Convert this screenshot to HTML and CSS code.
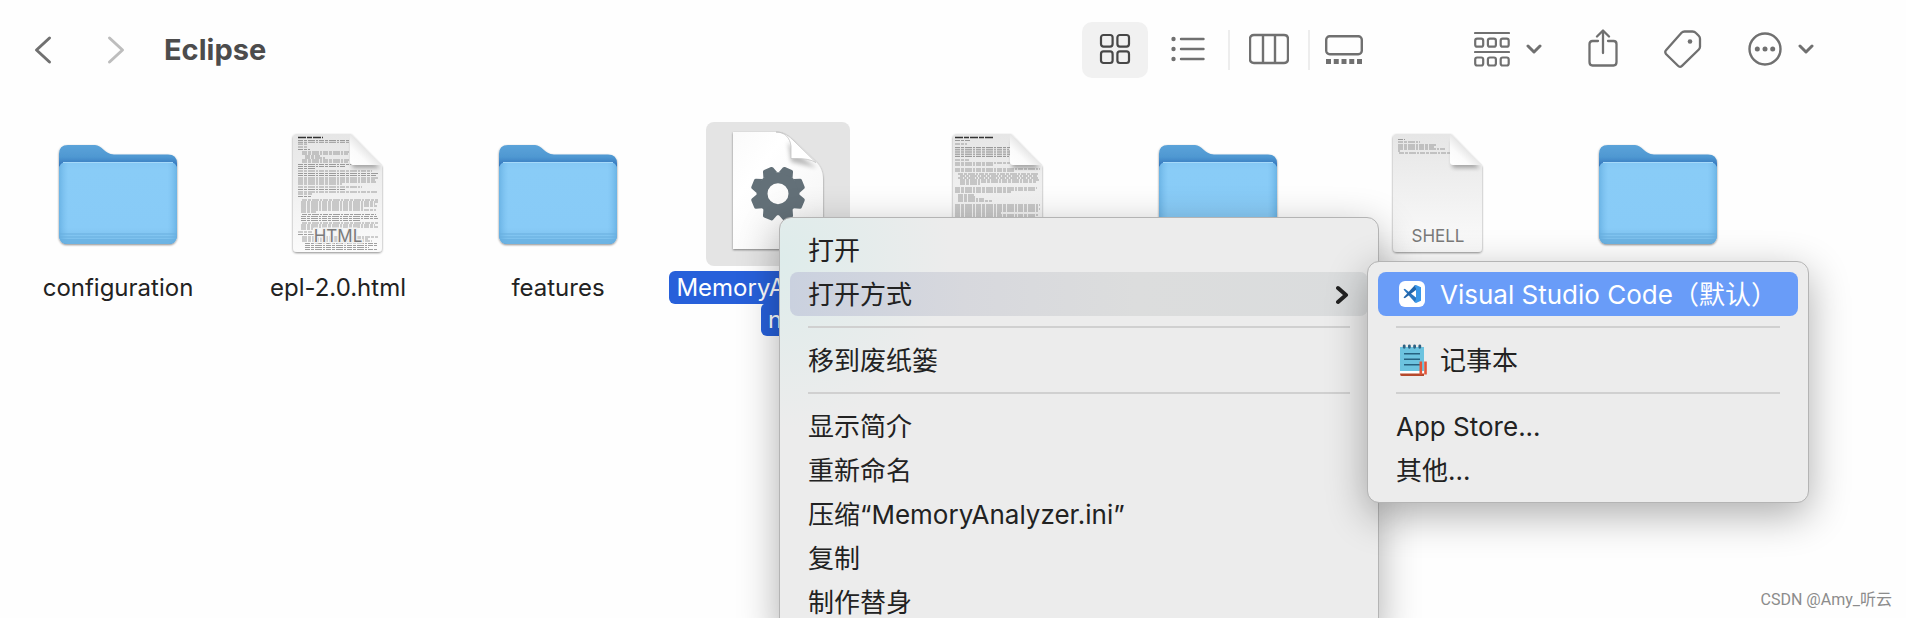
FILE: index.html
```
<!DOCTYPE html>
<html lang="zh-CN">
<head>
<meta charset="utf-8">
<title>Eclipse</title>
<link rel="stylesheet" href="styles.css">
</head>
<body>
<svg class="defs" width="0" height="0" aria-hidden="true">
  <defs>
    <linearGradient id="folder-back" x1="0" y1="0" x2="0" y2="1">
      <stop offset="0" stop-color="#5ba3d9"/><stop offset=".12" stop-color="#4f98d2"/><stop offset=".2" stop-color="#3579bf"/><stop offset="1" stop-color="#3579bf"/>
    </linearGradient>
    <linearGradient id="folder-front" x1="0" y1="0" x2="0" y2="1">
      <stop offset="0" stop-color="#84c8f4"/><stop offset=".1" stop-color="#89ccf7"/><stop offset=".8" stop-color="#88cbf7"/><stop offset="1" stop-color="#79bdea"/>
    </linearGradient>
    <linearGradient id="folder-side" x1="0" y1="0" x2="1" y2="0">
      <stop offset="0" stop-color="#4c9bd3" stop-opacity=".5"/><stop offset=".08" stop-color="#6cb4e6" stop-opacity="0"/><stop offset=".92" stop-color="#6cb4e6" stop-opacity="0"/><stop offset="1" stop-color="#4c9bd3" stop-opacity=".5"/>
    </linearGradient>
    <linearGradient id="page" x1="0" y1="0" x2="0" y2="1">
      <stop offset="0" stop-color="#e6e6e6"/><stop offset="1" stop-color="#fbfbfb"/>
    </linearGradient>
    <linearGradient id="fold" x1="0" y1="1" x2=".6" y2=".4">
      <stop offset="0" stop-color="#fff"/><stop offset=".5" stop-color="#fbfbfb"/><stop offset="1" stop-color="#dedede"/>
    </linearGradient>
    <linearGradient id="ini-page" x1="0" y1="0" x2="1" y2="1">
      <stop offset="0" stop-color="#fafafa"/><stop offset=".3" stop-color="#fff"/><stop offset="1" stop-color="#f4f4f4"/>
    </linearGradient>
    <filter id="drop" x="-10%" y="-10%" width="120%" height="125%">
      <feDropShadow dx="0" dy="1" stdDeviation="1.2" flood-color="#000" flood-opacity=".45"/>
    </filter>
    <filter id="soft" x="-30%" y="-30%" width="160%" height="160%">
      <feGaussianBlur stdDeviation="2"/>
    </filter>
    <symbol id="folder" viewBox="0 0 144 144">
      <g filter="url(#drop)">
        <path fill="url(#folder-back)" d="M13 112V32q0-9 9-9h27c7 0 9 9 19 9.500h54q9 0 9 9V112q0 10-9 10H22q-9 0-9-10z"/>
        <path fill="url(#folder-front)" d="M13 48q0-8 8-8h102q8 0 8 8v65q0 9-9 9H22q-9 0-9-9z"/>
      </g>
      <path fill="url(#folder-side)" d="M13 48q0-8 8-8h102q8 0 8 8v65q0 9-9 9H22q-9 0-9-9z"/>
      <path stroke="#a5d9fa" d="M17 40.500h110" fill="none"/>
      <path stroke="#69afdf" d="M13.500 112h117M14 115h116" fill="none"/>
      <path fill="#65aedf" opacity=".65" d="M14 117h116q-2 5-8 5H22q-6 0-8-5z"/>
    </symbol>
    <symbol id="sheet" viewBox="0 0 144 144">
      <path filter="url(#drop)" fill="url(#page)" d="M31 12h54l31 32v82q0 4-4 4H31q-4 0-4-4V16q0-4 4-4z"/>
    </symbol>
    <symbol id="corner" viewBox="0 0 144 144">
      <path filter="url(#soft)" fill="#000" opacity=".3" d="M86 18v25q0 3 3 3h25z"/>
      <path fill="url(#fold)" d="M84 12v28q0 3 3 3h29z"/>
    </symbol>
    <symbol id="chevron" viewBox="0 0 16 10">
      <path d="M2 2l6 6 6-6" fill="none" stroke="currentColor" stroke-width="3" stroke-linecap="round" stroke-linejoin="round"/>
    </symbol>
  </defs>
</svg>

<header class="toolbar">
  <nav class="history">
    <button class="nav" type="button" aria-label="返回"><svg width="20" height="30" viewBox="0 0 20 30"><path d="M16.500 3L3.500 15l13 12"/></svg></button>
    <button class="nav nav-off" type="button" aria-label="前进"><svg width="20" height="30" viewBox="0 0 20 30"><path d="M3.500 3l13 12-13 12"/></svg></button>
  </nav>
  <h1 class="title">Eclipse</h1>
  <div class="views">
    <button class="view view-on" type="button" aria-label="图标">
      <svg width="32" height="32" viewBox="0 0 32 32"><g fill="none" stroke="currentColor" stroke-width="2.200"><rect x="2" y="2" width="11.600" height="11.600" rx="2.500"/><rect x="18.400" y="2" width="11.600" height="11.600" rx="2.500"/><rect x="2" y="18.400" width="11.600" height="11.600" rx="2.500"/><rect x="18.400" y="18.400" width="11.600" height="11.600" rx="2.500"/></g></svg>
    </button>
    <button class="view view-list" type="button" aria-label="列表">
      <svg width="34" height="28" viewBox="0 0 34 28"><g fill="currentColor"><circle cx="2.500" cy="4" r="2.200"/><circle cx="2.500" cy="14" r="2.200"/><circle cx="2.500" cy="24" r="2.200"/></g><path d="M10 4h22.500M10 14h22.500M10 24h22.500" stroke="currentColor" stroke-width="2.400" stroke-linecap="round"/></svg>
    </button>
    <span class="rule"></span>
    <button class="view view-columns" type="button" aria-label="分栏">
      <svg width="40" height="32" viewBox="0 0 40 32"><path d="M5 2h30q4 0 4 4v20q0 4-4 4H5q-4 0-4-4V6q0-4 4-4zM14 2v28M26 2v28" fill="none" stroke="currentColor" stroke-width="2.400"/></svg>
    </button>
    <span class="rule"></span>
    <button class="view view-gallery" type="button" aria-label="画廊">
      <svg width="38" height="32" viewBox="0 0 38 32"><rect x="1.200" y="3.200" width="35.600" height="18" rx="3.500" fill="none" stroke="currentColor" stroke-width="2.400"/><path d="M1 26h5v5H1zM8.750 26h5v5h-5zM16.500 26h5v5h-5zM24.250 26h5v5h-5zM32 26h5v5h-5z" fill="currentColor"/></svg>
    </button>
  </div>
  <div class="tools">
    <button class="tool" type="button" aria-label="分组">
      <svg width="36" height="36" viewBox="0 0 36 36"><g fill="none" stroke="currentColor" stroke-width="2.200"><path d="M1 2h34M1 21h34" stroke-linecap="round"/><rect x="1.200" y="7.700" width="8" height="8" rx="2"/><rect x="13.900" y="7.700" width="8" height="8" rx="2"/><rect x="26.700" y="7.700" width="8" height="8" rx="2"/><rect x="1.200" y="26.500" width="8" height="8" rx="2"/><rect x="13.900" y="26.500" width="8" height="8" rx="2"/><rect x="26.700" y="26.500" width="8" height="8" rx="2"/></g></svg>
      <svg width="16" height="10"><use href="#chevron"/></svg>
    </button>
    <button class="tool" type="button" aria-label="共享">
      <svg width="30" height="40" viewBox="0 0 30 40"><g fill="none" stroke="currentColor" stroke-width="2.300" stroke-linecap="round" stroke-linejoin="round"><path d="M10 12H4.500q-3 0-3 3v18q0 3.500 3 3.500h21q3 0 3-3.500V15q0-3-3-3H20"/><path d="M15 24V2M9 7.500L15 1.500l6 6"/></g></svg>
    </button>
    <button class="tool" type="button" aria-label="标签">
      <svg width="38" height="40" viewBox="0 0 38 40"><path d="M20.500 2.500h8q2 0 3.200 1.300l3 3q1.300 1.300 1.300 3v8q0 1.500-1.200 2.700L18 36.800q-2 2-4 0L2 25q-1.500-2 0-3.700L17.500 3.800q1.300-1.300 3-1.300z" fill="none" stroke="currentColor" stroke-width="2.300"/><circle cx="26" cy="12.500" r="2.300" fill="currentColor"/></svg>
    </button>
    <button class="tool" type="button" aria-label="更多">
      <svg width="34" height="34" viewBox="0 0 34 34"><circle cx="17" cy="17" r="15.500" fill="none" stroke="currentColor" stroke-width="2.400"/><g fill="currentColor"><circle cx="9.300" cy="17" r="2.500"/><circle cx="17" cy="17" r="2.500"/><circle cx="24.700" cy="17" r="2.500"/></g></svg>
      <svg width="16" height="10"><use href="#chevron"/></svg>
    </button>
  </div>
</header>

<main class="files">
  <figure class="file"><svg class="thumb" viewBox="0 0 144 144"><use href="#folder"/></svg><figcaption class="name">configuration</figcaption></figure>
  <figure class="file">
    <svg class="thumb" viewBox="0 0 144 144">
      <use href="#sheet"/>
      <path class="heading" d="M32 15.500h25"/>
      <g class="lines">
        <path d="M32 18.500h54M32 20.300h51M32 22.100h9M32 25h10M32 27.500h12M36 30h50M36 32h46M39 34h15M39 36h20M36 38h50M36 40h46"/>
        <path d="M32 42.500h54M32 44.500h48M32 46.500h18M32 49h74M32 51.500h80M32 53.500h78M32 56h80M32 58h77M32 60h78M32 62h44M32 65h64M32 67.500h48M32 70h79M32 72h14M32 74.500h13"/>
        <path d="M36 78h76M35 80h77M35 82h74M35 84h76M35 86h62M35 88h75M35 90h15M36 92.500h74M35 94.500h76M35 96.500h77M35 98.500h60M36 101h76M35 103h74M35 105h77M35 107h12M32 110h14M32 112.500h16M36 115h76M36 117h66M36 119h70M39 121.500h72M39 123.500h73M39 125.500h64M39 127.500h72"/>
      </g>
      <text x="72" y="120" class="kind kind-halo">HTML</text>
      <use href="#corner"/>
    </svg>
    <figcaption class="name">epl-2.0.html</figcaption>
  </figure>
  <figure class="file"><svg class="thumb" viewBox="0 0 144 144"><use href="#folder"/></svg><figcaption class="name">features</figcaption></figure>
  <figure class="file file-on">
    <svg class="thumb" viewBox="0 0 144 144">
      <path filter="url(#drop)" fill="url(#ini-page)" d="M27 10h43c8 0 14 5 18 9l20 19c6 5 9 11 9 20v69H27z"/>
      <path filter="url(#soft)" fill="#000" opacity=".25" d="M82 20l3 20 26 6-14-10z"/>
      <path d="M70 10c9 0 14 6 15 14v12.500h6c7 0 14 1 19 4L88 19c-5-5-10-9-18-9z" fill="#fff" stroke="#c4c4c4" stroke-width=".8" stroke-linejoin="round"/>
      <g fill="#637078" transform="translate(72 71.700)">
        <circle r="16" fill="none" stroke="#637078" stroke-width="11"/>
        <g transform="rotate(22.500)">
          <path id="tooth" d="M-7.500-20L-5.500-26q.4-1.300 1.800-1.300h7.400q1.400 0 1.800 1.300L7.500-20z"/>
          <use href="#tooth" transform="rotate(45)"/><use href="#tooth" transform="rotate(90)"/><use href="#tooth" transform="rotate(135)"/><use href="#tooth" transform="rotate(180)"/><use href="#tooth" transform="rotate(225)"/><use href="#tooth" transform="rotate(270)"/><use href="#tooth" transform="rotate(315)"/>
        </g>
      </g>
    </svg>
    <figcaption class="name"><span class="mark">MemoryAnalyzer.i<br>ni</span></figcaption>
  </figure>
  <figure class="file">
    <svg class="thumb" viewBox="0 0 144 144">
      <use href="#sheet"/>
      <path class="heading" d="M29 15.500h39"/>
      <g class="lines">
        <path d="M29 18.500h15M29 22h12M29 25.500h58M29 27.300h54M29 29.100h56M29 30.900h55M29 32.700h56M29 34.500h54M29 38h14M29 41h55M29 43h38M29 47h85M29 49h60"/>
        <path d="M32 52h80M34 54h77M32 56h80M34 58h79M34 60h76M34 62h20M29 66h82M29 68h80M29 70h56M32 73h16M32 75h18M32 77h26M32 79h34M29 83h85M29 85h83M29 87h85M29 89h84M29 91h46M29 93h84M29 95h80"/>
      </g>
      <use href="#corner"/>
    </svg>
  </figure>
  <figure class="file"><svg class="thumb" viewBox="0 0 144 144"><use href="#folder"/></svg></figure>
  <figure class="file">
    <svg class="thumb" viewBox="0 0 144 144">
      <use href="#sheet"/>
      <path class="lines" d="M32 17.500h7M32 20h22M32 23h38M32 25h36M32 27h48M32 29h2M33 31h53"/>
      <text x="72" y="120" class="kind">SHELL</text>
      <use href="#corner"/>
    </svg>
  </figure>
  <figure class="file"><svg class="thumb" viewBox="0 0 144 144"><use href="#folder"/></svg></figure>
</main>

<div class="menu menu-main" role="menu">
  <button class="item" type="button">打开</button>
  <button class="item item-open" type="button">打开方式<svg class="more" width="14" height="20" viewBox="0 0 14 20"><path d="M2 3l8 7-8 7"/></svg></button>
  <hr class="split">
  <button class="item" type="button">移到废纸篓</button>
  <hr class="split">
  <button class="item" type="button">显示简介</button>
  <button class="item" type="button">重新命名</button>
  <button class="item" type="button">压缩“MemoryAnalyzer.ini”</button>
  <button class="item" type="button">复制</button>
  <button class="item" type="button">制作替身</button>
</div>

<div class="menu menu-sub" role="menu">
  <button class="item item-on" type="button">
    <svg class="app" width="32" height="34" viewBox="0 0 32 34">
      <rect x="3" y="3" width="26" height="26" rx="6" fill="#fff"/>
      <path d="M7.500 11.500l1.300-.8L20 19.500v4.500l-1 .5z" fill="#2a76bf"/>
      <path d="M7.500 19.500l1.300.8L20 12V7.500L19 7z" fill="#2265aa"/>
      <path d="M20 7l5 2.300v13.400L20 25l-1.500-1L20 21.500v-11L18.500 8z" fill="#3a97e8"/>
    </svg>
    Visual Studio Code（默认）
  </button>
  <hr class="split">
  <button class="item" type="button">
    <svg class="app" width="32" height="34" viewBox="0 0 32 34">
      <path d="M4 26h24v4H4z" fill="#fff"/><path d="M4 29.500h24v2.500H5.500Q4 32 4 29.500z" fill="#b5492c"/>
      <path d="M4 3h24v24H4z" fill="#6cc3df"/>
      <path d="M8.200 1.800v1.500M13.400 1.800v1.500M18.600 1.800v1.500M23.800 1.800v1.500" stroke="#2f6283" stroke-width="2.800" stroke-linecap="round"/>
      <path d="M8 9.700h16M8 15.200h16M8 20.700h16" stroke="#26617f" stroke-width="1.600"/>
      <path d="M24.800 17.500v13M29.500 17.500v13" stroke="#e2553a" stroke-width="2.600"/>
    </svg>
    记事本
  </button>
  <hr class="split">
  <button class="item" type="button">App Store...</button>
  <button class="item" type="button">其他...</button>
</div>

<p class="credit">CSDN @Amy_听云</p>
</body>
</html>
```
FILE: styles.css
```
* {
  box-sizing: border-box;
}

html {
  height: 100%;
  overflow: hidden;
}

body {
  margin: 0;
  height: 100%;
  overflow: hidden;
  position: relative;
  background: #fefefe;
  color: #222;
  font-family: Inter, "Noto Sans CJK SC", sans-serif;
  font-size: 24px;
}

button {
  margin: 0;
  padding: 0;
  border: 0;
  background: none;
  color: inherit;
  font: inherit;
}

svg {
  display: block;
  flex: none;
}

.defs {
  position: absolute;
}

/* Toolbar */
.toolbar {
  display: flex;
  align-items: center;
  height: 100px;
  padding: 0 92px 0 33px;
  color: #707070;
}

.history {
  display: flex;
  gap: 53px;
}

.nav path {
  fill: none;
  stroke: currentColor;
  stroke-width: 3;
  stroke-linecap: round;
  stroke-linejoin: round;
}

.nav-off {
  color: #bdbdbd;
}

.title {
  margin: 0 0 0 38px;
  color: #4c4c4c;
  font-size: 29px;
  font-weight: 700;
  line-height: 36px;
}

.views {
  display: flex;
  align-items: center;
  margin-left: auto;
}

.view {
  display: flex;
  align-items: center;
  justify-content: center;
  height: 56px;
  padding-bottom: 2px;
}

.view-on {
  width: 66px;
  border-radius: 10px;
  background: #f1f1f1;
  color: #474747;
}

.view-list {
  width: 80px;
}

.view-columns {
  width: 78px;
}

.view-gallery {
  width: 68px;
}

.rule {
  width: 2px;
  height: 40px;
  background: #ededed;
}

.tools {
  display: flex;
  align-items: center;
  gap: 46px;
  margin-left: 96px;
  padding-bottom: 2px;
}

.tool {
  display: flex;
  align-items: center;
  gap: 16px;
}

/* Files */
.files {
  display: flex;
  padding: 22px 8px;
}

.file {
  flex: none;
  display: flex;
  flex-direction: column;
  align-items: center;
  gap: 4px;
  width: 220px;
  margin: 0;
}

.thumb {
  width: 144px;
  height: 144px;
  border-radius: 8px;
}

.file-on .thumb {
  background: #e4e4e4;
}

.name {
  padding-top: 2px;
  line-height: 32px;
  text-align: center;
  white-space: nowrap;
}

.mark {
  padding: 2px 7px;
  border-radius: 6px;
  background: #2760da;
  color: #fff;
  -webkit-box-decoration-break: clone;
  box-decoration-break: clone;
}

.heading {
  fill: none;
  stroke: #333;
  stroke-width: 1.6px;
  stroke-dasharray: 8 1 5 1;
}

.lines {
  fill: none;
  stroke: #707070;
  stroke-width: 1px;
  stroke-dasharray: 5 1 3 1 7 1 2 1;
  opacity: 0.65;
}

.kind {
  fill: #7a7a7a;
  font-size: 17px;
  text-anchor: middle;
}

.kind-halo {
  stroke: #f2f2f2;
  stroke-width: 3px;
  paint-order: stroke;
}

/* Menus */
.menu {
  position: absolute;
  padding: 10px;
  border: 1px solid #b4b4b4;
  border-radius: 12px;
  background: #ececec;
  background-clip: padding-box;
  box-shadow: 0 12px 40px rgba(0, 0, 0, 0.32);
  font-size: 26px;
}

.menu-main {
  top: 217px;
  left: 779px;
  width: 600px;
  background-image: radial-gradient(circle at 0 40px, #deeceb, #ececec 170px);
}

.menu-sub {
  top: 261px;
  left: 1367px;
  width: 442px;
}

.item {
  display: flex;
  align-items: center;
  width: 100%;
  height: 44px;
  padding: 2px 18px 0;
  border-radius: 8px;
  line-height: 42px;
  text-align: left;
  white-space: nowrap;
}

.item-open {
  background: linear-gradient(90deg, #cad1df, #d7d8dd 30%, #dcdddd 60%, #dadcdd);
}

.item-on {
  background: #699cf8;
  color: #fff;
}

.more {
  margin-left: auto;
  fill: none;
  stroke: #222;
  stroke-width: 4;
  stroke-linecap: round;
  stroke-linejoin: round;
}

.app {
  margin-right: 12px;
}

.split {
  height: 2px;
  margin: 10px 18px;
  border: 0;
  background: #d0d0d0;
}

.credit {
  position: absolute;
  right: 14px;
  bottom: 8px;
  margin: 0;
  color: #8c8c8c;
  font-family: Roboto, "Noto Sans CJK SC", sans-serif;
  font-size: 16px;
  line-height: 20px;
}
```
